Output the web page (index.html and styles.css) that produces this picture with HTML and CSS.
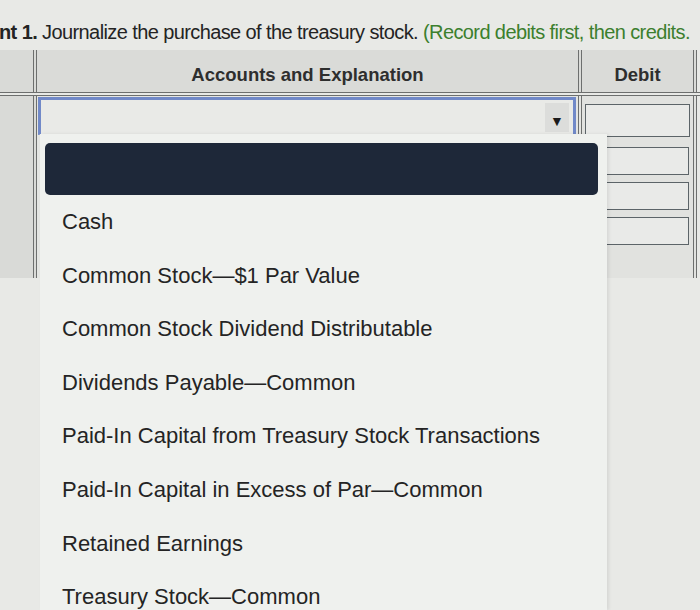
FILE: index.html
```html
<!DOCTYPE html>
<html>
<head>
<meta charset="utf-8">
<link rel="stylesheet" href="styles.css">
</head>
<body>
<div class="page">
  <p class="title"><b>nt 1.</b> Journalize the purchase of the treasury stock. <span class="hint">(Record debits first, then credits.</span></p>
  <div class="journal">
    <div class="row head">
      <div class="c0"></div>
      <div class="c1">Accounts and Explanation</div>
      <div class="c2">Debit</div>
    </div>
    <div class="row r1">
      <div class="c0"></div>
      <div class="c1"><div class="select"><span class="arrow">&#9660;</span></div></div>
      <div class="c2"><div class="input"></div></div>
    </div>
    <div class="row rn">
      <div class="c0"></div>
      <div class="c1"></div>
      <div class="c2"><div class="input"></div></div>
    </div>
    <div class="row rn">
      <div class="c0"></div>
      <div class="c1"></div>
      <div class="c2"><div class="input"></div></div>
    </div>
    <div class="row rn">
      <div class="c0"></div>
      <div class="c1"></div>
      <div class="c2"><div class="input"></div></div>
    </div>
    <div class="row filler">
      <div class="c0"></div>
      <div class="c1"></div>
      <div class="c2"></div>
    </div>
  </div>
  <div class="dropdown">
    <div class="highlight"></div>
    <ul class="options">
      <li>Cash</li>
      <li>Common Stock&mdash;$1 Par Value</li>
      <li>Common Stock Dividend Distributable</li>
      <li>Dividends Payable&mdash;Common</li>
      <li>Paid-In Capital from Treasury Stock Transactions</li>
      <li>Paid-In Capital in Excess of Par&mdash;Common</li>
      <li>Retained Earnings</li>
      <li>Treasury Stock&mdash;Common</li>
    </ul>
  </div>
</div>
</body>
</html>
```
FILE: styles.css
```css
html, body {
  margin: 0;
  padding: 0;
}
body {
  width: 700px;
  height: 610px;
  overflow: hidden;
  background: #e8e9e6;
  font-family: "Liberation Sans", Arial, sans-serif;
  color: #262626;
}
.page {
  position: relative;
  width: 700px;
  height: 610px;
  overflow: hidden;
}
.title {
  margin: 0;
  box-sizing: border-box;
  height: 50px;
  padding-top: 14px;
  line-height: 36px;
  font-size: 20px;
  letter-spacing: -0.6px;
  white-space: nowrap;
  margin-left: -1px;
  color: #232323;
}
.title b {
  font-weight: bold;
}
.hint {
  color: #3c7f2e;
}
.journal {
  width: 720px;
}
.row {
  display: grid;
  grid-template-columns: 37px 545px 115px 30px;
}
.c0, .c1, .c2 {
  box-sizing: border-box;
  border-right: 4px double #6d6f6e;
}
.c0 {
  background: #d9dad7;
}
.c1 {
  background: #e4e5e2;
}
.c2 {
  background: #e1e2df;
}
.head {
  height: 42px;
  border-bottom: 4px double #6d6f6e;
}
.head .c1, .head .c2 {
  background: #dadbd8;
  text-align: center;
  font-weight: bold;
  font-size: 18.5px;
  padding-top: 14px;
  line-height: 22px;
  color: #2e2e2e;
}
.r1 {
  height: 45px;
}
.r1 .c1 {
  padding: 1px 2px 0 1px;
}
.select {
  box-sizing: border-box;
  height: 38px;
  border: 3px solid #7189c8;
  border-bottom: 1px solid #b9bcc4;
  background: #e9eae7;
  display: flex;
  justify-content: flex-end;
  align-items: stretch;
  padding: 3px 4px 2px 0;
}
.arrow {
  width: 24px;
  background: #dcdddb;
  font-size: 14px;
  color: #1b1b1b;
  display: flex;
  align-items: center;
  justify-content: center;
  padding-top: 6px;
  box-sizing: border-box;
}
.r1 .c2 {
  padding: 8px 3px 0 3px;
}
.input {
  box-sizing: border-box;
  height: 33px;
  border: 1.5px solid #5c6468;
  background: #e9eae8;
}
.rn {
  height: 35px;
}
.rn .c2 {
  padding: 6px 4px 0 3px;
}
.rn .input {
  height: 28px;
}
.filler {
  height: 32px;
}
.dropdown {
  position: absolute;
  left: 40px;
  top: 134px;
  width: 567px;
  bottom: 0;
  background: #eff1ee;
  box-shadow: 2px 0 3px rgba(0, 0, 0, 0.08);
  padding: 9px 9px 0 5px;
  box-sizing: border-box;
}
.highlight {
  height: 52px;
  background: #1e2839;
  border-radius: 5px;
}
.options {
  list-style: none;
  margin: 0;
  padding: 0 0 0 17px;
}
.options li {
  height: 53.6px;
  line-height: 53.6px;
  font-size: 22px;
  color: #242424;
  white-space: nowrap;
}
```
